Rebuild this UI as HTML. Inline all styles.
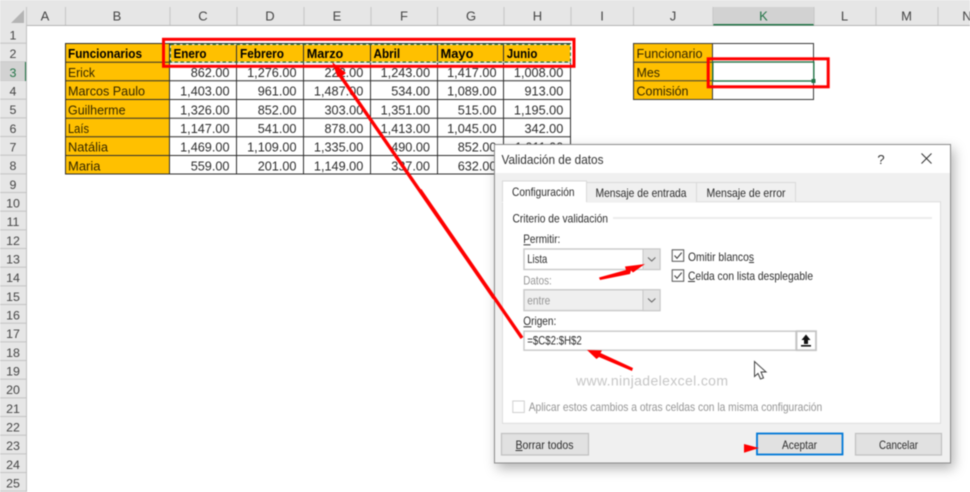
<!DOCTYPE html>
<html lang="es"><head><meta charset="utf-8"><title>Validación de datos</title>
<style>
html,body{margin:0;padding:0;width:970px;height:492px;overflow:hidden;background:#fff}
svg{display:block;filter:blur(.45px)}
text{font-family:"Liberation Sans",sans-serif}
.h{font-size:13px;fill:#444;text-anchor:middle}
.r{font-size:12.4px;fill:#444;text-anchor:middle}
.n{font-size:12.7px;fill:#2c2c2c;text-anchor:end}
.l{font-size:13px;fill:#332600}
.b{font-size:13px;font-weight:bold;fill:#000}
.d{font-size:12px;fill:#2c2c2c}
.g{font-size:12px;fill:#959595}
</style></head><body>
<svg width="970" height="492" viewBox="0 0 970 492" xmlns="http://www.w3.org/2000/svg">
<defs>
<pattern id="rows" x="0" y="25" width="26" height="18.667" patternUnits="userSpaceOnUse"><rect width="26" height="18.667" fill="#e6e6e6"/><rect y="17.7" width="26" height="1" fill="#c2c2c2"/></pattern>
<filter id="sh" x="-5%" y="-5%" width="112%" height="115%"><feDropShadow dx="3" dy="5" stdDeviation="6" flood-color="#000" flood-opacity=".3"/></filter>
</defs>
<rect width="970" height="492" fill="#fff"/>
<!-- column headers -->
<rect width="970" height="25" fill="#e6e6e6"/>
<rect x="713" y="7" width="101" height="18" fill="#d2d2d2"/>
<rect y="25" width="970" height="1" fill="#b4b4b4"/>
<rect x="713" y="24" width="101" height="1.5" fill="#217346"/>
<g fill="#c6c6c6"><rect x="26" y="7" width="1" height="18"/><rect x="65" y="7" width="1" height="18"/><rect x="169.5" y="7" width="1" height="18"/><rect x="236.5" y="7" width="1" height="18"/><rect x="303.5" y="7" width="1" height="18"/><rect x="370.5" y="7" width="1" height="18"/><rect x="437" y="7" width="1" height="18"/><rect x="503.5" y="7" width="1" height="18"/><rect x="570.5" y="7" width="1" height="18"/><rect x="633" y="7" width="1" height="18"/><rect x="712.5" y="7" width="1" height="18"/><rect x="813.5" y="7" width="1" height="18"/><rect x="875.5" y="7" width="1" height="18"/><rect x="937.5" y="7" width="1" height="18"/></g>
<polygon points="24,10 24,23 11,23" fill="#b4b4b4"/>
<text class="h" x="45" y="20.5">A</text><text class="h" x="117" y="20.5">B</text><text class="h" x="203" y="20.5">C</text><text class="h" x="270" y="20.5">D</text><text class="h" x="337" y="20.5">E</text><text class="h" x="404" y="20.5">F</text><text class="h" x="471" y="20.5">G</text><text class="h" x="537.5" y="20.5">H</text><text class="h" x="602" y="20.5">I</text><text class="h" x="673" y="20.5">J</text><text class="h" x="763.5" y="20.5" style="fill:#217346">K</text><text class="h" x="844.5" y="20.5">L</text><text class="h" x="906.5" y="20.5">M</text><text class="h" x="967" y="20.5">N</text>
<!-- row headers -->
<rect x="0" y="25" width="26" height="467" fill="url(#rows)"/>
<rect x="0" y="62.6" width="26" height="18" fill="#d2d2d2"/>
<rect x="25" y="62" width="1.5" height="19" fill="#217346"/>
<rect x="26" y="25" width="1" height="467" fill="#c0c0c0"/>
<g>
<text class="r" x="13" y="39.5">1</text><text class="r" x="13" y="58.1">2</text><text class="r" x="13" y="76.8" style="fill:#217346">3</text><text class="r" x="13" y="95.5">4</text><text class="r" x="13" y="114.1">5</text><text class="r" x="13" y="132.8">6</text><text class="r" x="13" y="151.5">7</text><text class="r" x="13" y="170.1">8</text><text class="r" x="13" y="188.8">9</text><text class="r" x="13" y="207.5">10</text><text class="r" x="13" y="226.1">11</text><text class="r" x="13" y="244.8">12</text><text class="r" x="13" y="263.5">13</text><text class="r" x="13" y="282.1">14</text><text class="r" x="13" y="300.8">15</text><text class="r" x="13" y="319.5">16</text><text class="r" x="13" y="338.1">17</text><text class="r" x="13" y="356.8">18</text><text class="r" x="13" y="375.5">19</text><text class="r" x="13" y="394.1">20</text><text class="r" x="13" y="412.8">21</text><text class="r" x="13" y="431.5">22</text><text class="r" x="13" y="450.1">23</text><text class="r" x="13" y="468.8">24</text><text class="r" x="13" y="487.5">25</text>
</g>
<!-- main table -->
<rect x="65" y="43.5" width="105" height="130.7" fill="#ffc000"/>
<rect x="170" y="43.5" width="401" height="18.7" fill="#ffc000"/>
<g stroke="#2e2e2e" stroke-width="1" fill="none">
<path d="M65.5 43.5H570.5V174H65.5Z"/>
<path d="M65.5 62.2H570.5M65.5 80.8H570.5M65.5 99.5H570.5M65.5 118.2H570.5M65.5 136.8H570.5M65.5 155.5H570.5"/>
<path d="M169.5 43.5V174M236.5 43.5V174M303.5 43.5V174M370.5 43.5V174M437.5 43.5V174M503.5 43.5V174"/>
</g>
<text class="b" x="68" y="58.2" textLength="74" lengthAdjust="spacingAndGlyphs">Funcionarios</text>
<text class="b" x="173.5" y="58.2" textLength="33" lengthAdjust="spacingAndGlyphs">Enero</text>
<text class="b" x="240" y="58.2" textLength="44" lengthAdjust="spacingAndGlyphs">Febrero</text>
<text class="b" x="306.7" y="58.2" textLength="36.6" lengthAdjust="spacingAndGlyphs">Marzo</text>
<text class="b" x="373.5" y="58.2" textLength="26.7" lengthAdjust="spacingAndGlyphs">Abril</text>
<text class="b" x="440.5" y="58.2" textLength="33" lengthAdjust="spacingAndGlyphs">Mayo</text>
<text class="b" x="506.7" y="58.2" textLength="30.7" lengthAdjust="spacingAndGlyphs">Junio</text>
<text class="l" x="68" y="77" textLength="27" lengthAdjust="spacingAndGlyphs">Erick</text>
<text class="l" x="68" y="95.7" textLength="77" lengthAdjust="spacingAndGlyphs">Marcos Paulo</text>
<text class="l" x="68" y="114.3" textLength="57.5" lengthAdjust="spacingAndGlyphs">Guilherme</text>
<text class="l" x="68" y="133" textLength="21" lengthAdjust="spacingAndGlyphs">Laís</text>
<text class="l" x="68" y="151.7" textLength="40" lengthAdjust="spacingAndGlyphs">Natália</text>
<text class="l" x="68" y="170.3" textLength="32.5" lengthAdjust="spacingAndGlyphs">Maria</text>
<g>
<text class="n" x="229.5" y="77">862.00</text><text class="n" x="296.5" y="77">1,276.00</text><text class="n" x="363.3" y="77">222.00</text><text class="n" x="430" y="77">1,243.00</text><text class="n" x="496.5" y="77">1,417.00</text><text class="n" x="563.3" y="77">1,008.00</text>
<text class="n" x="229.5" y="95.7">1,403.00</text><text class="n" x="296.5" y="95.7">961.00</text><text class="n" x="363.3" y="95.7">1,487.00</text><text class="n" x="430" y="95.7">534.00</text><text class="n" x="496.5" y="95.7">1,089.00</text><text class="n" x="563.3" y="95.7">913.00</text>
<text class="n" x="229.5" y="114.3">1,326.00</text><text class="n" x="296.5" y="114.3">852.00</text><text class="n" x="363.3" y="114.3">303.00</text><text class="n" x="430" y="114.3">1,351.00</text><text class="n" x="496.5" y="114.3">515.00</text><text class="n" x="563.3" y="114.3">1,195.00</text>
<text class="n" x="229.5" y="133">1,147.00</text><text class="n" x="296.5" y="133">541.00</text><text class="n" x="363.3" y="133">878.00</text><text class="n" x="430" y="133">1,413.00</text><text class="n" x="496.5" y="133">1,045.00</text><text class="n" x="563.3" y="133">342.00</text>
<text class="n" x="229.5" y="151.7">1,469.00</text><text class="n" x="296.5" y="151.7">1,109.00</text><text class="n" x="363.3" y="151.7">1,335.00</text><text class="n" x="430" y="151.7">490.00</text><text class="n" x="496.5" y="151.7">852.00</text><text class="n" x="563.3" y="151.7">1,011.00</text>
<text class="n" x="229.5" y="170.3">559.00</text><text class="n" x="296.5" y="170.3">201.00</text><text class="n" x="363.3" y="170.3">1,149.00</text><text class="n" x="430" y="170.3">337.00</text><text class="n" x="496.5" y="170.3">632.00</text>
</g>
<!-- marching ants -->
<rect x="170.5" y="44.5" width="400" height="17.5" fill="none" stroke="#f4f4e0" stroke-width="1"/>
<rect x="170.5" y="44.5" width="400" height="17.5" fill="none" stroke="#217346" stroke-width="1" stroke-dasharray="3.5 2.5"/>
<!-- side table -->
<rect x="633.5" y="43.5" width="79.5" height="56" fill="#ffc000"/>
<g stroke="#3a3a3a" stroke-width="1" fill="none">
<path d="M633.5 43.5H813.5V99.5H633.5Z"/>
<path d="M633.5 62.2H813.5M633.5 80.8H813.5M712.5 43.5V99.5"/>
</g>
<text class="l" x="636.5" y="58.2" textLength="66" lengthAdjust="spacingAndGlyphs">Funcionario</text>
<text class="l" x="636.5" y="77" textLength="23.5" lengthAdjust="spacingAndGlyphs">Mes</text>
<text class="l" x="636.5" y="95.7" textLength="52" lengthAdjust="spacingAndGlyphs">Comisión</text>
<rect x="712.8" y="62" width="101" height="19" fill="#fff" stroke="#217346" stroke-width="1.4"/>
<rect x="811.5" y="79" width="4" height="4" fill="#217346"/>
<!-- red frames behind dialog -->
<rect x="163.5" y="39.3" width="410.5" height="27" fill="none" stroke="#ff0000" stroke-width="3"/>
<rect x="708.2" y="58.8" width="120" height="28" fill="none" stroke="#ff0000" stroke-width="3"/>
<path d="M332 62 L346 73 L341 77 L337.5 77Z" fill="#ff0000"/>
<line x1="337" y1="71" x2="494" y2="298" stroke="#ff0000" stroke-width="3.4"/>
<!-- dialog -->
<rect x="494.5" y="144.5" width="456" height="318.5" fill="#f0f0f0" stroke="#8c8c8c" stroke-width="1" filter="url(#sh)"/>
<rect x="495" y="145" width="455" height="28" fill="#fff"/>
<text x="501.5" y="164" textLength="102" lengthAdjust="spacingAndGlyphs" style="font-size:13px;fill:#333">Validación de datos</text>
<text x="881" y="164" text-anchor="middle" style="font-size:13px;fill:#333">?</text>
<path d="M921.5 153.5L931.5 163.5M931.5 153.5L921.5 163.5" stroke="#333" stroke-width="1" fill="none"/>
<!-- panel + tabs -->
<rect x="502.5" y="201.8" width="438" height="221.5" fill="#fff" stroke="#dcdcdc"/>
<path d="M586.5 202V182.5H696.5V202M696.5 182.5H795.5V202" fill="#f0f0f0" stroke="#d9d9d9"/>
<path d="M502 202.5V181H586.5V202.5Z" fill="#fff"/>
<path d="M502.5 202V181H586.5V202" fill="none" stroke="#d9d9d9"/>
<text class="d" x="512" y="196" textLength="62.5" lengthAdjust="spacingAndGlyphs">Configuración</text>
<text class="d" x="595.5" y="197" textLength="91" lengthAdjust="spacingAndGlyphs">Mensaje de entrada</text>
<text class="d" x="706.5" y="197" textLength="79" lengthAdjust="spacingAndGlyphs">Mensaje de error</text>
<text class="d" x="512.5" y="222.5" textLength="95.5" lengthAdjust="spacingAndGlyphs">Criterio de validación</text>
<rect x="613" y="217" width="319" height="2" fill="#ececec"/>
<!-- permitir -->
<text class="d" x="523.3" y="243" textLength="37" lengthAdjust="spacingAndGlyphs">Permitir:</text>
<rect x="523.5" y="244.3" width="7" height="1" fill="#333"/>
<rect x="524" y="249" width="136" height="20.5" fill="#fff" stroke="#c8c8c8" stroke-width="1.4"/>
<rect x="643" y="249" width="17" height="20.5" fill="#e2e2e2" stroke="#c8c8c8" stroke-width="1"/>
<path d="M648 257.5L651.7 261L655.4 257.5" fill="none" stroke="#666" stroke-width="1"/>
<text class="d" x="527.3" y="263.2" textLength="20" lengthAdjust="spacingAndGlyphs">Lista</text>
<text class="g" x="523.3" y="284.5" textLength="28.5" lengthAdjust="spacingAndGlyphs">Datos:</text>
<rect x="524" y="289.8" width="136" height="20.8" fill="#efefef" stroke="#c8c8c8" stroke-width="1.4"/>
<rect x="643" y="289.8" width="17" height="20.8" fill="#e4e4e4" stroke="#c8c8c8" stroke-width="1"/>
<path d="M648 298.5L651.7 302L655.4 298.5" fill="none" stroke="#666" stroke-width="1"/>
<text class="g" x="527.3" y="304.3" textLength="23" lengthAdjust="spacingAndGlyphs">entre</text>
<!-- checkboxes -->
<rect x="672.2" y="249.8" width="11.5" height="11.5" fill="#fff" stroke="#555"/>
<path d="M674.5 255.5L677 258.3L681.7 252.6" fill="none" stroke="#444" stroke-width="1.1"/>
<rect x="672.2" y="269.8" width="11.5" height="11.5" fill="#fff" stroke="#555"/>
<path d="M674.5 275.5L677 278.3L681.7 272.6" fill="none" stroke="#444" stroke-width="1.1"/>
<text class="d" x="688" y="261" textLength="66" lengthAdjust="spacingAndGlyphs">Omitir blancos</text>
<rect x="749" y="262" width="5" height="1" fill="#333"/>
<text class="d" x="688" y="280" textLength="125" lengthAdjust="spacingAndGlyphs">Celda con lista desplegable</text>
<rect x="688" y="281" width="7" height="1" fill="#333"/>
<!-- origen -->
<text class="d" x="523.3" y="325" textLength="33" lengthAdjust="spacingAndGlyphs">Origen:</text>
<rect x="523.5" y="326.3" width="8" height="1" fill="#333"/>
<rect x="524" y="331.2" width="272" height="19" fill="#fff" stroke="#c8c8c8" stroke-width="1.4"/>
<text class="d" x="527.3" y="344.5" textLength="54.5" lengthAdjust="spacingAndGlyphs">=$C$2:$H$2</text>
<rect x="796.5" y="331.2" width="19.5" height="19" fill="#fff" stroke="#c4c4c4" stroke-width="1.8"/>
<path d="M806 334.5L810.5 340H808V344H804V340H801.5Z" fill="#111"/>
<rect x="801" y="345" width="10" height="1.6" fill="#111"/>
<!-- watermark -->
<text x="576" y="385.5" textLength="152" style="font-size:14px;fill:#c6c6c6">www.ninjadelexcel.com</text>
<!-- cursor -->
<path d="M754.5 361.5V376.5L758 373.5L760.5 379L763.5 378L761 372H766Z" fill="#fff" stroke="#444" stroke-width="1"/>
<!-- disabled checkbox -->
<rect x="512.8" y="401" width="11.5" height="11.5" fill="#fff" stroke="#d0d0d0"/>
<text class="g" x="528.7" y="411" textLength="293.5" lengthAdjust="spacingAndGlyphs">Aplicar estos cambios a otras celdas con la misma configuración</text>
<!-- buttons -->
<rect x="501.5" y="433.5" width="87" height="21.5" fill="#e1e1e1" stroke="#c0c0c0" stroke-width="1.2"/>
<text class="d" x="515.5" y="449" textLength="58" lengthAdjust="spacingAndGlyphs">Borrar todos</text>
<rect x="515.5" y="450" width="7" height="1" fill="#333"/>
<rect x="757" y="433.5" width="85.5" height="21" fill="#e1e1e1" stroke="#0078d7" stroke-width="1.8"/>
<text class="d" x="782" y="449" textLength="35" lengthAdjust="spacingAndGlyphs">Aceptar</text>
<rect x="855.5" y="433.5" width="86" height="21.5" fill="#e1e1e1" stroke="#c0c0c0" stroke-width="1.2"/>
<text class="d" x="879" y="449" textLength="39" lengthAdjust="spacingAndGlyphs">Cancelar</text>
<!-- red arrows on top -->
<line x1="420" y1="190" x2="522" y2="338" stroke="#ff0000" stroke-width="3.4"/>
<path d="M599 277.5L626 270L625 266.5L645 264L633 272.5L631 270.5L630 274L600 280Z" fill="#ff0000"/>
<path d="M587 350L602 350.5L600.5 353L633 368L632 371L599 357L596.5 359Z" fill="#ff0000"/>
<path d="M744 444L759 448L744 452.7Z" fill="#ff0000"/>
</svg>
</body></html>
